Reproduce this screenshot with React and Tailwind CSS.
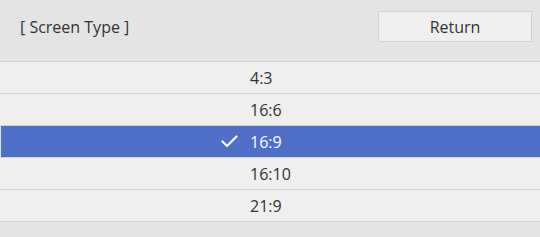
import React, { useState } from "react";

const options = ["4:3", "16:6", "16:9", "16:10", "21:9"];

const App = () => {
  const [selected, setSelected] = useState("16:9");

  return (
    <div
      className="w-[540px] h-[237px] bg-[#e4e4e4] text-[#333333] text-[16px]"
      style={{ fontFamily: '"Open Sans", "Noto Sans", sans-serif' }}
    >
      {/* Header */}
      <div className="h-[62px] flex items-center justify-between pl-5 pr-2 border-b border-[#d2d2d2]">
        <span className="-mt-[8px]">[ Screen Type ]</span>
        <button className="w-[154px] h-[31px] bg-[#efefef] border border-[#d2d2d2] -mt-[8px]">
          Return
        </button>
      </div>

      {/* Options */}
      <ul>
        {options.map((opt) => {
          const active = opt === selected;
          return (
            <li
              key={opt}
              onClick={() => setSelected(opt)}
              className={`h-[32px] border-b border-[#d2d2d2] cursor-pointer ${
                active ? "bg-[#dfe5f4] pl-px" : "bg-[#efefef]"
              }`}
            >
              <div
                className={`h-full flex items-center ${
                  active ? "bg-[#4f6ec8] text-white" : ""
                }`}
              >
                <span className="w-[250px] flex justify-end pr-[13px]">
                  {active && (
                    <svg width="17" height="13" viewBox="0 0 17 13" fill="none">
                      <path
                        d="M1.5 6.5 L6 11 L15.5 1.5"
                        stroke="white"
                        strokeWidth="2.2"
                        strokeLinecap="round"
                        strokeLinejoin="round"
                      />
                    </svg>
                  )}
                </span>
                <span className={active ? "-ml-px" : ""}>{opt}</span>
              </div>
            </li>
          );
        })}
      </ul>
    </div>
  );
};

export default App;
